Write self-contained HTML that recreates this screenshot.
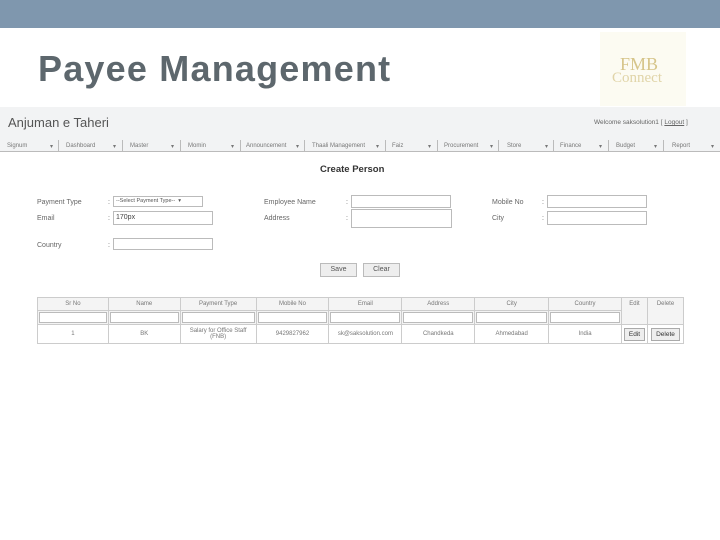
<!DOCTYPE html>
<html><head><meta charset="utf-8"><style>
*{margin:0;padding:0;box-sizing:border-box}
body{width:720px;height:540px;background:#fff;position:relative;overflow:hidden;font-family:"Liberation Sans",sans-serif}
.a{position:absolute}
.t{font-size:7px;color:#666;white-space:nowrap}
.in{position:absolute;border:1px solid #bbb;background:#fff}
.nav span{position:absolute;top:143px;font-size:6px;color:#777}
.sep{position:absolute;top:140px;width:1px;height:11px;background:#bbb}
table{position:absolute;left:37px;top:297px;width:647px;border-collapse:collapse;font-size:6px;color:#777;text-align:center}
td{border:1px solid #ccc;padding:0}
.h td{height:13px;background:#f4f4f4}
.f td{height:13px;background:#f4f4f4;padding:1px}
.f td div{height:11px;border:1px solid #bbb;background:#fff}
.d td{height:19px}
.btn{display:inline-block;border:1px solid #aaa;background:#eee;padding:2px 4px;color:#333;font-size:6.5px}
</style></head><body>
<div class="a" style="left:0;top:0;width:720px;height:28px;background:#7f97ae"></div>
<div class="a" style="left:38px;top:48px;font-size:36px;font-weight:bold;color:#5d676d;letter-spacing:1.2px">Payee Management</div>
<div class="a" style="left:600px;top:32px;width:86px;height:74px;background:#fcfbf2"></div>
<div class="a" style="left:620px;top:54px;font-family:'Liberation Serif',serif;font-size:18px;color:#d6c58a">FMB</div>
<div class="a" style="left:612px;top:70px;font-family:'Liberation Serif',serif;font-size:15px;color:#e0d4a8">Connect</div>
<div class="a" style="left:0;top:107px;width:720px;height:45px;background:#f2f3f4;border-bottom:1px solid #bbb"></div>
<div class="a" style="left:8px;top:115px;font-size:13px;color:#555">Anjuman e Taheri</div>
<div class="a t" style="left:594px;top:119px;font-size:6.5px">Welcome saksolution1 [ <u>Logout</u> ]</div>
<div class="nav">
<span style="left:7px">Signum</span><span style="left:50px">▾</span><div class="sep" style="left:58px"></div>
<span style="left:66px">Dashboard</span><span style="left:113px">▾</span><div class="sep" style="left:122px"></div>
<span style="left:130px">Master</span><span style="left:171px">▾</span><div class="sep" style="left:180px"></div>
<span style="left:188px">Momin</span><span style="left:231px">▾</span><div class="sep" style="left:240px"></div>
<span style="left:246px">Announcement</span><span style="left:296px">▾</span><div class="sep" style="left:304px"></div>
<span style="left:312px">Thaali Management</span><span style="left:376px">▾</span><div class="sep" style="left:385px"></div>
<span style="left:392px">Faiz</span><span style="left:428px">▾</span><div class="sep" style="left:437px"></div>
<span style="left:444px">Procurement</span><span style="left:490px">▾</span><div class="sep" style="left:498px"></div>
<span style="left:507px">Store</span><span style="left:545px">▾</span><div class="sep" style="left:553px"></div>
<span style="left:560px">Finance</span><span style="left:599px">▾</span><div class="sep" style="left:608px"></div>
<span style="left:616px">Budget</span><span style="left:654px">▾</span><div class="sep" style="left:663px"></div>
<span style="left:672px">Report</span><span style="left:711px">▾</span>
</div>
<div class="a" style="left:320px;top:164px;font-size:9.5px;font-weight:bold;color:#333">Create Person</div>
<div class="a t" style="left:37px;top:199px">Payment Type</div><div class="a t" style="left:108px;top:199px">:</div>
<div class="in" style="left:113px;top:196px;width:90px;height:11px;font-size:5.5px;color:#555;padding:1px 2px">--Select Payment Type--&nbsp;&nbsp;▾</div>
<div class="a t" style="left:37px;top:215px">Email</div><div class="a t" style="left:108px;top:215px">:</div>
<div class="in" style="left:113px;top:211px;width:100px;height:14px;font-size:7px;color:#444;padding:2px 2px">170px</div>
<div class="a t" style="left:37px;top:242px">Country</div><div class="a t" style="left:108px;top:242px">:</div>
<div class="in" style="left:113px;top:238px;width:100px;height:12px"></div>
<div class="a t" style="left:264px;top:199px">Employee Name</div><div class="a t" style="left:346px;top:199px">:</div>
<div class="in" style="left:351px;top:195px;width:100px;height:13px"></div>
<div class="a t" style="left:264px;top:215px">Address</div><div class="a t" style="left:346px;top:215px">:</div>
<div class="in" style="left:351px;top:209px;width:101px;height:19px"></div>
<div class="a t" style="left:492px;top:199px">Mobile No</div><div class="a t" style="left:542px;top:199px">:</div>
<div class="in" style="left:547px;top:195px;width:100px;height:13px"></div>
<div class="a t" style="left:492px;top:215px">City</div><div class="a t" style="left:542px;top:215px">:</div>
<div class="in" style="left:547px;top:211px;width:100px;height:14px"></div>
<div class="a" style="left:320px;top:263px;width:37px;height:14px;border:1px solid #bbb;background:#eee;font-size:7px;color:#555;text-align:center;line-height:12px">Save</div>
<div class="a" style="left:363px;top:263px;width:37px;height:14px;border:1px solid #bbb;background:#eee;font-size:7px;color:#555;text-align:center;line-height:12px">Clear</div>
<table>
<colgroup><col style="width:71px"><col style="width:72px"><col style="width:76px"><col style="width:73px"><col style="width:73px"><col style="width:73px"><col style="width:74px"><col style="width:73px"><col style="width:26px"><col style="width:36px"></colgroup>
<tr class="h"><td>Sr No</td><td>Name</td><td>Payment Type</td><td>Mobile No</td><td>Email</td><td>Address</td><td>City</td><td>Country</td><td rowspan="2" style="vertical-align:top;padding-top:3px">Edit</td><td rowspan="2" style="vertical-align:top;padding-top:3px">Delete</td></tr>
<tr class="f"><td><div></div></td><td><div></div></td><td><div></div></td><td><div></div></td><td><div></div></td><td><div></div></td><td><div></div></td><td><div></div></td></tr>
<tr class="d"><td>1</td><td>BK</td><td>Salary for Office Staff<br>(FNB)</td><td>9429827962</td><td>sk@saksolution.com</td><td>Chandkeda</td><td>Ahmedabad</td><td>India</td><td><span class="btn">Edit</span></td><td><span class="btn">Delete</span></td></tr>
</table>
</body></html>
